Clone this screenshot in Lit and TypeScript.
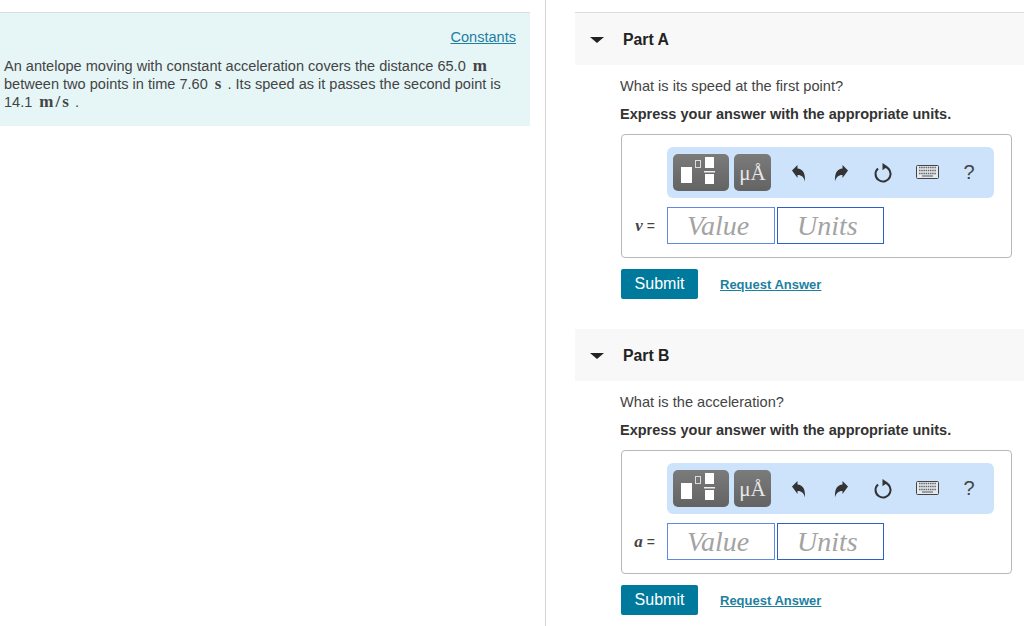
import { LitElement, html, css, svg } from "lit";
import { customElement } from "lit/decorators.js";

@customElement("app-root")
export class AppRoot extends LitElement {
  static styles = css`
    :host { display: block; width: 1024px; height: 626px; overflow: hidden; background: #fff; font-family: "Liberation Sans", Arial, sans-serif; color: #333; }
    * { box-sizing: border-box; }
    .page { display: grid; grid-template-columns: 546px 1fr; height: 626px; }
    .left { border-right: 1px solid #d4d4d4; padding: 12px 15px 0 0; }
    .intro { height: 114px; background: #e6f6f7; border-top: 1px solid #dcdcdc; padding: 15px 0 0 4px; font-size: 14.55px; line-height: 18px; color: #444; white-space: nowrap; }
    .constants { display: block; text-align: right; padding-right: 14px; color: #1f7f9f; text-decoration: underline; margin-bottom: 11px; line-height: 18px; }
    .m { font-family: "Liberation Serif", serif; font-weight: 700; font-size: 17px; color: #444; letter-spacing: 2px; margin-left: 3px; }
    .right { padding: 12px 0 0 29px; }
    .part { height: 316px; border-top: 1px solid #dcdcdc; }
    .part + .part { border-top-color: transparent; }
    .head { height: 52px; background: #f8f8f8; display: flex; align-items: center; gap: 19px; padding-left: 15px; font-size: 15.8px; font-weight: 700; color: #222; }
    .head b { padding-top: 1px; }
    .tri { width: 0; height: 0; border-left: 7px solid transparent; border-right: 7px solid transparent; border-top: 6px solid #222; margin-top: 1px; }
    .body { padding: 12px 12px 0 46px; }
    .q { font-size: 14.6px; line-height: 18px; color: #444; margin-left: -1px; }
    .ex { font-size: 14.5px; line-height: 18px; font-weight: 700; color: #333; margin: 10px 0 0 -1px; }
    .box { height: 124px; margin-top: 11px; border: 1px solid #b8b8b8; border-radius: 4px; padding: 12px 17px 0 45px; }
    .tools { height: 51px; background: #cde3fb; border-radius: 6px; display: flex; align-items: center; padding-left: 6px; }
    .tbtn { height: 37px; border-radius: 5px; background: linear-gradient(#7b7b7b, #636363); display: flex; align-items: center; justify-content: center; color: #e8e8e8; }
    .t1 { width: 56px; }
    .t2 { width: 37px; margin-left: 5px; font-family: "Liberation Serif", serif; font-size: 21px; padding-top: 2px; }
    .ic { display: flex; align-items: center; justify-content: center; width: 42px; color: #333; }
    .ic1 { margin-left: 7px; }
    .kb { width: 44px; padding-left: 3px; }
    .help { font-size: 20px; color: #444; width: 42px; text-align: center; }
    .row { display: flex; align-items: center; margin-top: 9px; }
    .var { width: 45px; margin-left: -45px; display: flex; justify-content: flex-end; align-items: baseline; gap: 4px; font-size: 14px; color: #444; padding-right: 12px; }
    .var i { font-family: "Liberation Serif", serif; font-weight: 700; font-size: 17px; }
    .inp { width: 108px; height: 37px; border: 1px solid #5f8ae0; font-family: "Liberation Serif", serif; font-style: italic; font-size: 28px; color: #a3a3a3; line-height: 35px; padding-left: 19px; }
    .inp + .inp { width: 107px; margin-left: 2px; border-color: #2f5fc0; }
    .actions { display: flex; align-items: center; margin-top: 11px; }
    .submit { width: 77px; height: 30px; background: #007a9c; border-radius: 2px; color: #fff; font-size: 16px; display: flex; align-items: center; justify-content: center; }
    .req { margin-left: 22px; font-size: 13px; font-weight: 700; color: #1d7f9f; text-decoration: underline; }
  `;

  private part(name: string, q: string, v: string) {
    return html`<section class="part">
      <div class="head"><span class="tri"></span><b>${name}</b></div>
      <div class="body">
        <div class="q">${q}</div>
        <div class="ex">Express your answer with the appropriate units.</div>
        <div class="box">
          <div class="tools">
            <div class="tbtn t1">
              <svg width="56" height="37" viewBox="0 0 56 37">
                <rect x="8" y="13" width="11" height="16" fill="#fff" />
                <rect x="22.500" y="6.500" width="5" height="7" fill="none" stroke="#ddd" />
                <rect x="32" y="3" width="9" height="11" fill="#fff" />
                <rect x="31" y="17" width="11" height="1.500" fill="#eee" />
                <rect x="32" y="20" width="9" height="10" fill="#fff" />
              </svg>
            </div>
            <div class="tbtn t2">μÅ</div>
            <div class="ic ic1"><svg width="16" height="20" viewBox="0 0 16 20"><path d="M1 7.500 6.500 2v3.500c5 .5 8 4 7.500 13-1-4-3-6.500-7.500-6.500v3z" fill="#333" /></svg></div>
            <div class="ic"><svg width="16" height="20" viewBox="0 0 16 20"><path d="M15 7.500 9.500 2v3.500c-5 .5-8 4-7.500 13 1-4 3-6.500 7.500-6.500v3z" fill="#333" /></svg></div>
            <div class="ic"><svg width="20" height="22" viewBox="0 0 20 22"><path d="M5 6.400a7.500 7.500 0 1 0 6.500-1.800" fill="none" stroke="#333" stroke-width="2" /><path d="M9.500 1 14.500 4.600 9.500 8.200z" fill="#333" /></svg></div>
            <div class="ic kb"><svg width="23" height="15" viewBox="0 0 23 15"><rect x=".5" y=".5" width="22" height="13" rx="1" fill="#e4e9ee" stroke="#444" />${[2.5, 5.5, 8.5].map((y) => svg`<path d="M3 ${y}h17" stroke="#666" stroke-width="1.600" stroke-dasharray="1.500 .7" />`)}<path d="M6 11h11" stroke="#555" /></svg></div>
            <div class="help">?</div>
          </div>
          <div class="row">
            <div class="var"><i>${v}</i><span>=</span></div>
            <div class="inp">Value</div>
            <div class="inp">Units</div>
          </div>
        </div>
        <div class="actions">
          <div class="submit">Submit</div>
          <span class="req">Request Answer</span>
        </div>
      </div>
    </section>`;
  }

  render() {
    return html`<div class="page">
      <div class="left">
        <div class="intro">
          <a class="constants">Constants</a>
          An antelope moving with constant acceleration covers the distance 65.0 <span class="m">m</span><br />
          between two points in time 7.60 <span class="m">s</span> . Its speed as it passes the second point is<br />
          14.1 <span class="m">m/s</span> .
        </div>
      </div>
      <div class="right">
        ${this.part("Part A", "What is its speed at the first point?", "v")}
        ${this.part("Part B", "What is the acceleration?", "a")}
      </div>
    </div>`;
  }
}
